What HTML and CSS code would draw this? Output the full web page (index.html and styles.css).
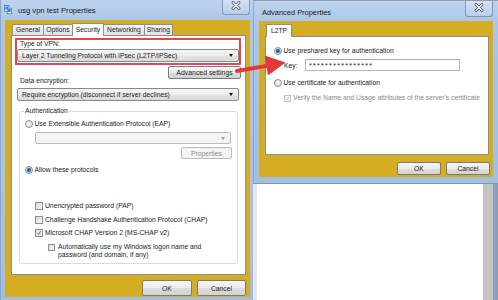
FILE: index.html
```html
<!DOCTYPE html>
<html>
<head>
<meta charset="utf-8">
<link rel="stylesheet" href="styles.css">
</head>
<body>
<div class="desktop">

  <div class="win bgwin">
    <div class="bg-client"></div>
    <div class="bg-scroll"></div>
  </div>

  <div class="win win-main">
    <div class="titlebar">
      <svg class="appicon" viewBox="0 0 8 10" width="8" height="10">
        <rect x="0.5" y="0.5" width="4.5" height="6" fill="#e9f1fb" stroke="#4f7fb8" stroke-width="0.8"/>
        <rect x="1.3" y="1.4" width="2.9" height="3.2" fill="#3f86d6"/>
        <rect x="3.3" y="3.2" width="4.2" height="5.6" fill="#f3f7fc" stroke="#4f7fb8" stroke-width="0.8"/>
        <rect x="4.1" y="4.1" width="2.6" height="2.8" fill="#2f6fc0"/>
      </svg>
      <span class="title">usg vpn test Properties</span>
      <div class="close">
        <svg viewBox="0 0 10 9" width="10" height="9"><path d="M2 1.5 L8 7.5 M8 1.5 L2 7.5" stroke="#3b4a5e" stroke-width="2.6" stroke-linecap="round"/><path d="M2 1.5 L8 7.5 M8 1.5 L2 7.5" stroke="#ffffff" stroke-width="1.3" stroke-linecap="round"/></svg>
      </div>
    </div>
    <div class="client">
      <div class="tabs">
        <div class="tab t-general">General</div>
        <div class="tab t-options">Options</div>
        <div class="tab active t-security">Security</div>
        <div class="tab t-networking">Networking</div>
        <div class="tab t-sharing">Sharing</div>
      </div>
      <div class="panel main-panel">
        <div class="highlight">
          <div class="label vpn-label">Type of VPN:</div>
          <div class="combo"><span class="combo-text">Layer 2 Tunneling Protocol with IPsec (L2TP/IPSec)</span><i class="arrow"></i></div>
        </div>
        <div class="adv-row"><div class="btn adv">Advanced settings</div></div>
        <div class="label enc-label">Data encryption:</div>
        <div class="combo enc"><span class="combo-text">Require encryption (disconnect if server declines)</span><i class="arrow"></i></div>
        <fieldset class="group">
          <legend>Authentication</legend>
          <div class="group-body">
            <div class="opt opt-eap"><span class="radio"></span><span>Use Extensible Authentication Protocol (EAP)</span></div>
            <div class="combo disabled eap"><span class="combo-text"></span><i class="arrow"></i></div>
            <div class="props-row"><div class="btn disabled props">Properties</div></div>
            <div class="opt opt-allow"><span class="radio on"></span><span>Allow these protocols</span></div>
            <div class="protocols">
              <div class="opt p-pap"><span class="check"></span><span>Unencrypted password (PAP)</span></div>
              <div class="opt p-chap"><span class="check"></span><span>Challenge Handshake Authentication Protocol (CHAP)</span></div>
              <div class="opt p-ms"><span class="check"><svg viewBox="0 0 8 8" width="8" height="8"><path d="M2 4.3 L3.4 6 L6.2 1.8" stroke="#34508f" stroke-width="1.1" fill="none"/></svg></span><span>Microsoft CHAP Version 2 (MS-CHAP v2)</span></div>
              <div class="opt p-auto"><span class="check small"></span><span class="wrap">Automatically use my Windows logon name and<br>password (and domain, if any)</span></div>
            </div>
          </div>
        </fieldset>
      </div>
      <div class="buttons">
        <div class="btn ok">OK</div>
        <div class="btn cancel">Cancel</div>
      </div>
    </div>
  </div>

  <div class="win win-adv">
    <div class="titlebar">
      <span class="title">Advanced Properties</span>
      <div class="close">
        <svg viewBox="0 0 10 9" width="10" height="9"><path d="M2 1.5 L8 7.5 M8 1.5 L2 7.5" stroke="#3b4a5e" stroke-width="2.6" stroke-linecap="round"/><path d="M2 1.5 L8 7.5 M8 1.5 L2 7.5" stroke="#ffffff" stroke-width="1.3" stroke-linecap="round"/></svg>
      </div>
    </div>
    <div class="client">
      <div class="tabs small-tabs">
        <div class="tab active t-l2tp">L2TP</div>
      </div>
      <div class="panel adv-panel">
        <div class="opt a-psk"><span class="radio on"></span><span>Use preshared key for authentication</span></div>
        <div class="key-row">
          <span class="key-label">Key:</span>
          <div class="textbox">****************</div>
        </div>
        <div class="opt a-cert"><span class="radio"></span><span>Use certificate for authentication</span></div>
        <div class="opt a-verify disabled-text"><span class="check small dis"><svg viewBox="0 0 8 8" width="7" height="7"><path d="M2 4.3 L3.4 6 L6.2 1.8" stroke="#a8a8a8" stroke-width="1.1" fill="none"/></svg></span><span>Verify the Name and Usage attributes of the server's certificate</span></div>
      </div>
      <div class="buttons adv-buttons">
        <div class="btn ok2">OK</div>
        <div class="btn cancel2">Cancel</div>
      </div>
    </div>
  </div>

  <svg class="arrow-note" viewBox="0 0 60 30" width="60" height="30">
    <path d="M7 21 L38 15.6" stroke="#e5363c" stroke-width="4" stroke-linecap="round"/>
    <polygon points="55.5,12.6 34.6,5.6 38,25.6" fill="#e5363c"/>
  </svg>
</div>
</body>
</html>
```

FILE: styles.css
```css
* { box-sizing: border-box; margin: 0; padding: 0; }
html, body { width: 498px; height: 300px; overflow: hidden; }
body {
  font-family: "Liberation Sans", Arial, sans-serif;
  font-size: 6.75px;
  color: #1b1b1b;
  background: #ffffff;
}
.desktop { position: relative; width: 498px; height: 300px; overflow: hidden; }

/* windows on the desktop */
.win {
  position: absolute;
  display: flex;
  flex-direction: column;
  background: linear-gradient(180deg, #bdd4ee 0, #abc6e6 22px, #a2bee2 100%);
}
.win-main { left: 0; top: 0; width: 253px; height: 300px; padding: 0 3px 3px 4px; border-left: 1px solid #8ea6c4; }
.win-adv { left: 253px; top: 0; width: 245px; height: 184px; padding: 0 5px 6px 5px; border-top: 1px solid #8c9db3; border-left: 1px solid #8ea6c4; border-bottom: 1px solid #7f97b6; }
.bgwin { left: 253px; top: 184px; width: 245px; height: 116px; flex-direction: row; background: #e4e8ee; padding-left: 4px; }
.bg-client { flex: 1; background: #ffffff; }
.bg-scroll { width: 10px; background: #c4c4c4; border-right: 5px solid #8d9fb8; width: 15px; }

.titlebar { display: flex; align-items: center; height: 20px; flex: none; }
.win-main .titlebar { height: 20px; }
.win-adv .titlebar { height: 20px; padding-top: 1px; }
.appicon { margin: 0 6px 0 -1px; }
.title { font-size: 7.6px; color: #1a1a1a; }
.win-adv .title { margin-left: 3px; font-size: 7.45px; padding-top: 1px; }
.close {
  margin-left: auto;
  align-self: flex-start;
  width: 28px;
  height: 15px;
  border: 1px solid #8297b3;
  border-top: none;
  border-radius: 0 0 3px 3px;
  background: linear-gradient(180deg, #d3e2f3, #b9cee8);
  display: flex;
  align-items: center;
  justify-content: center;
  padding-bottom: 3px;
}
.win-adv .close { margin-top: -1px; height: 16px; }

.client { flex: 1; background: #d5ad22; display: flex; flex-direction: column; }
.win-main .client { padding: 3px 4px 0 6px; }
.win-adv .client { padding: 4px 4px 0 6px; }

/* tabs */
.tabs { display: flex; align-items: flex-end; height: 12px; padding-left: 1px; position: relative; z-index: 1; }
.tab {
  height: 11px;
  line-height: 10px;
  text-align: center;
  border: 1px solid #8d9096;
  border-bottom: none;
  background: linear-gradient(180deg, #f3f3f3, #e3e3e3);
  margin-right: -1px;
}
.tab.active { height: 13px; margin-bottom: -1px; background: #ffffff; line-height: 11px; }
.t-general { width: 32px; }
.t-options { width: 30px; }
.t-security { width: 32px; }
.t-networking { width: 42px; }
.t-sharing { width: 29px; }
.small-tabs { height: 11px; }
.t-l2tp { width: 26px; height: 12px; line-height: 11px; }

.panel { background: #ffffff; border: 1px solid #898c95; display: flex; flex-direction: column; }
.main-panel { height: 240px; }
.adv-panel { height: 119px; }

/* controls */
.label { line-height: 8px; height: 8px; }
.highlight { margin: 2px 4px 0 3px; border: 2px solid #e3474c; padding-bottom: 1px; }
.vpn-label { padding-left: 3px; }
.combo {
  position: relative;
  height: 13px;
  margin-top: 1px;
  border: 1px solid #8a8a8a;
  border-radius: 2px;
  background: linear-gradient(180deg, #f5f5f5 0%, #eeeeee 50%, #e3e3e3 51%, #dadada 100%);
  display: flex;
  align-items: center;
  padding: 0 5px 0 4px;
}
.combo-text { flex: 1; white-space: nowrap; }
.arrow { width: 0; height: 0; border-left: 2.5px solid transparent; border-right: 2.5px solid transparent; border-top: 3px solid #111; }
.combo.disabled { border-color: #b8bcbf; background: #f4f4f4; }
.combo.disabled .arrow { border-top-color: #9a9a9a; }

.adv-row { display: flex; justify-content: flex-end; margin: 1px 4px 0 0; }
.btn {
  height: 13px;
  border: 1px solid #7a7a7a;
  border-radius: 2px;
  background: linear-gradient(180deg, #f5f5f5 0%, #ececec 50%, #dedede 51%, #d2d2d2 100%);
  display: flex;
  align-items: center;
  justify-content: center;
  white-space: nowrap;
}
.adv { width: 73px; font-size: 6.9px; }
.enc-label { margin-top: -2px; padding-left: 8px; }
.combo.enc { margin: 3px 6px 0 5px; }

.group {
  margin: 6px 7px 0 7px;
  border: 1px solid #d3dce3;
  border-radius: 3px;
  padding: 0;
  min-width: 0;
}
.group legend { margin-left: 4px; padding: 0 1px; line-height: 8px; height: 8px; }
.group-body { padding: 0 0 4px 5px; display: flex; flex-direction: column; }

.opt { display: flex; align-items: center; line-height: 8px; white-space: nowrap; }
.radio {
  width: 8px; height: 8px; flex: none;
  border-radius: 50%;
  border: 1px solid #8c8f93;
  background: radial-gradient(circle at 50% 45%, #f7f7f7 0, #dcdcdc 100%);
  margin-right: 1.5px;
}
.radio.on { background: radial-gradient(circle at 50% 50%, #1f4f86 0, #2f6aa8 1.3px, #6fa6d6 2.2px, #e4e4e4 2.7px, #f3f3f3 100%); }
.check {
  width: 8px; height: 8px; flex: none;
  border: 1px solid #8c8f93;
  background: linear-gradient(135deg, #dcdcdc, #f6f6f6);
  margin-right: 2px;
  display: flex; align-items: center; justify-content: center;
}
.check svg { display: block; }
.check.small { width: 7px; height: 7px; }
.check.dis { border-color: #c2c2c2; background: #f2f2f2; }

.opt-eap { margin-top: 5px; }
.combo.eap { margin: 4px 6px 0 10px; height: 12px; }
.props-row { display: flex; justify-content: flex-end; margin: 3px 5px 0 0; }
.btn.disabled { border-color: #b8bcbf; background: #f4f4f4; color: #8a8a8a; }
.props { width: 51px; height: 12px; }
.opt-allow { margin-top: 7px; }
.protocols { padding-left: 10px; display: flex; flex-direction: column; }
.p-pap { margin-top: 28px; }
.p-chap { margin-top: 6px; }
.p-ms { margin-top: 5px; }
.p-auto { margin-top: 6px; padding-left: 13px; align-items: flex-start; }
.p-auto .check { margin-top: 0.5px; margin-right: 3px; }
.wrap { white-space: nowrap; line-height: 8px; }

.buttons { display: flex; justify-content: flex-end; gap: 5px; margin-top: 5px; }
.ok { width: 50px; height: 16px; }
.cancel { width: 49px; height: 16px; }
.adv-buttons { margin-top: 7px; margin-right: -1px; }
.ok2, .cancel2 { width: 44px; height: 13px; }

/* advanced panel */
.a-psk { margin-top: 10px; padding-left: 8px; }
.key-row { display: flex; align-items: center; height: 12px; margin-top: 4px; padding-left: 18px; }
.key-label { width: 21px; }
.textbox {
  width: 155px; height: 12px;
  border: 1px solid #b5bac2;
  border-top-color: #a6abb3;
  background: #ffffff;
  padding-left: 3px;
  line-height: 11px;
  letter-spacing: 1.3px;
  font-size: 7px;
}
.a-cert { margin-top: 8px; padding-left: 8px; }
.a-verify { margin-top: 7px; padding-left: 18px; }
.disabled-text { color: #8a8a8a; }

.arrow-note { position: absolute; left: 230px; top: 50px; }
```
